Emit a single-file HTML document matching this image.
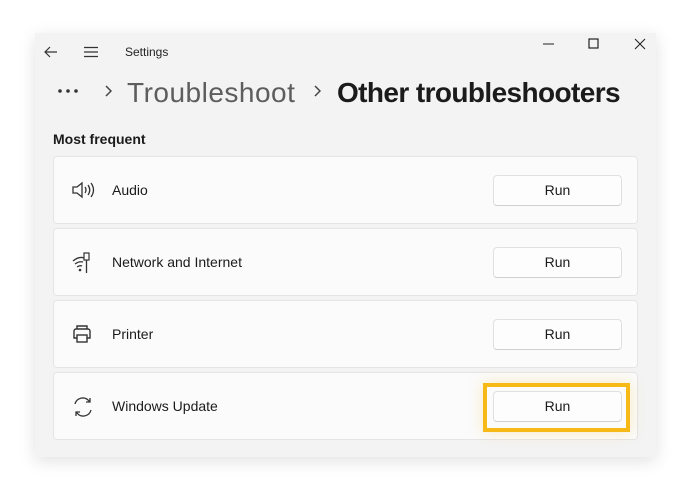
<!DOCTYPE html><html><head><style>
body{margin:0;width:689px;height:491px;background:#fff;font-family:"Liberation Sans",sans-serif;position:relative;overflow:hidden}
.win{position:absolute;left:35px;top:33px;width:621px;height:424px;background:#f3f3f3;box-shadow:0 4px 16px rgba(0,0,0,.12)}
.a{position:absolute}
.card{position:absolute;left:18px;width:585px;height:68px;background:#fbfbfb;border:1px solid #e5e5e5;border-radius:4px;box-sizing:border-box}
.card .t{position:absolute;left:58px;top:25px;font-size:14px;color:#1b1b1b}
.btn{position:absolute;left:439px;top:18px;width:129px;height:31px;background:#fdfdfd;border:1px solid #e0e0e0;border-bottom-color:#cfcfcf;border-radius:4px;box-sizing:border-box;text-align:center;line-height:29px;font-size:14px;color:#1b1b1b}
.ic{position:absolute;left:17px;top:22px}
</style></head><body>
<div class="win">
<svg class="a" style="left:8px;top:12px" width="16" height="14" viewBox="0 0 16 14"><path d="M14 7H2M7 2L2 7l5 5" fill="none" stroke="#333" stroke-width="1.2"/></svg>
<svg class="a" style="left:48px;top:13px" width="16" height="12"><path d="M1 1.5h14M1 6h14M1 10.5h14" stroke="#333" stroke-width="1.2"/></svg>
<div class="a" style="left:90px;top:12px;font-size:12px;color:#222">Settings</div>
<svg class="a" style="left:508px;top:10px" width="12" height="2"><path d="M0 1h11" stroke="#222"/></svg>
<svg class="a" style="left:553px;top:5px" width="12" height="12"><rect x="1" y="1" width="9" height="9" fill="none" stroke="#222" stroke-width="1.2"/></svg>
<svg class="a" style="left:599px;top:5px" width="12" height="12"><path d="M1 1l10 10M11 1L1 11" stroke="#222" stroke-width="1.1"/></svg>
<svg class="a" style="left:22px;top:55px" width="24" height="6"><circle cx="3" cy="3" r="1.8" fill="#333"/><circle cx="11" cy="3" r="1.8" fill="#333"/><circle cx="19" cy="3" r="1.8" fill="#333"/></svg>
<svg class="a" style="left:69px;top:52px" width="8" height="12"><path d="M2 1l5 5-5 5" fill="none" stroke="#444" stroke-width="1.5"/></svg>
<div class="a" style="left:92px;top:44px;font-size:28px;color:#5d5d5d;letter-spacing:0.5px">Troubleshoot</div>
<svg class="a" style="left:278px;top:52px" width="8" height="12"><path d="M2 1l5 5-5 5" fill="none" stroke="#444" stroke-width="1.5"/></svg>
<div class="a" style="left:302px;top:44px;font-size:28px;color:#1b1b1b;font-weight:bold;letter-spacing:-0.6px">Other troubleshooters</div>
<div class="a" style="left:18px;top:98px;font-size:14px;font-weight:bold;color:#1b1b1b">Most frequent</div>
<div class="card" style="top:123px"><svg class="ic" width="24" height="22" viewBox="0 0 24 22"><path d="M2 8h4l5-4v14l-5-4H2z" fill="none" stroke="#333" stroke-width="1.3"/><path d="M14 8q2 3 0 6M17 6q3.5 5 0 10M20 4q5 7 0 14" fill="none" stroke="#333" stroke-width="1.3"/></svg><div class="t">Audio</div><div class="btn">Run</div></div>
<div class="card" style="top:195px"><svg class="ic" width="24" height="24" viewBox="0 0 24 24"><path d="M2 10q6-5 11-3M4 13q4-3 8-2M6 16q3-2 5-1" fill="none" stroke="#333" stroke-width="1.3"/><circle cx="9" cy="19" r="1.3" fill="#333"/><rect x="13" y="2" width="5" height="7" fill="none" stroke="#333" stroke-width="1.2"/><path d="M15.5 9v13" stroke="#333" stroke-width="1.3"/></svg><div class="t">Network and Internet</div><div class="btn">Run</div></div>
<div class="card" style="top:267px"><svg class="ic" width="24" height="22" viewBox="0 0 24 22"><path d="M6 6V3h10v3M6 15H3V8a2 2 0 012-2h12a2 2 0 012 2v7h-3" fill="none" stroke="#333" stroke-width="1.4"/><rect x="6" y="12" width="10" height="7" fill="none" stroke="#333" stroke-width="1.4"/></svg><div class="t">Printer</div><div class="btn">Run</div></div>
<div class="card" style="top:339px"><svg class="ic" width="24" height="24" viewBox="0 0 24 24"><path d="M4 9a8 8 0 0114-3l1 1M20 15a8 8 0 01-14 3l-1-1" fill="none" stroke="#333" stroke-width="1.3"/><path d="M19 3v4h-4M5 21v-4h4" fill="none" stroke="#333" stroke-width="1.3"/></svg><div class="t">Windows Update</div><div class="btn">Run</div></div>
<div class="a" style="left:448px;top:350px;width:147px;height:49px;border:4px solid #f6b917;box-sizing:border-box;box-shadow:0 0 14px rgba(246,185,23,.25)"></div>
</div>
</body></html>
